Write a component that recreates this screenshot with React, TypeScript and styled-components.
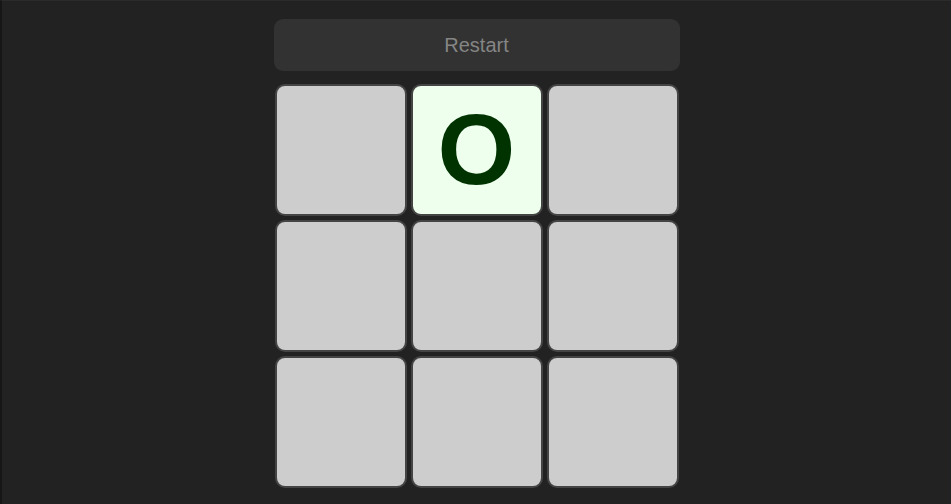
import styled, { createGlobalStyle } from "styled-components";

const GlobalStyle = createGlobalStyle`
  html, body {
    margin: 0;
    padding: 0;
    height: 100%;
    background-color: #222222;
  }
  body {
    border-left: 2px solid #161616;
    border-top: 1px solid #2b2b2b;
    box-sizing: border-box;
    font-family: "Liberation Sans", Arial, sans-serif;
  }
`;

const Page = styled.div`
  display: flex;
  flex-direction: column;
  align-items: center;
  padding-top: 18px;
`;

const Game = styled.div`
  display: flex;
  flex-direction: column;
  align-items: center;
  gap: 13px;
  width: 406px;
`;

const RestartButton = styled.button`
  width: 406px;
  height: 52px;
  border: none;
  border-radius: 9px;
  background-color: #323232;
  color: #858585;
  font-family: "Liberation Sans", Arial, sans-serif;
  font-size: 20px;
  cursor: pointer;
`;

const Board = styled.div`
  display: grid;
  grid-template-columns: repeat(3, 132px);
  grid-auto-rows: 132px;
  gap: 4px;
`;

const Cell = styled.div<{ $filled?: boolean }>`
  box-sizing: border-box;
  border: 2px solid #444444;
  border-radius: 10px;
  background-color: ${(props) => (props.$filled ? "#efffee" : "#cdcdcd")};
  color: #003300;
  display: flex;
  align-items: center;
  justify-content: center;
  font-family: "Liberation Sans", Arial, sans-serif;
  font-size: 100px;
  font-weight: bold;
  line-height: 1;
  padding-bottom: 2px;
`;

const board = ["", "O", "", "", "", "", "", "", ""];

export default function App() {
  return (
    <>
      <GlobalStyle />
      <Page>
        <Game>
          <RestartButton>Restart</RestartButton>
          <Board>
            {board.map((value, i) => (
              <Cell key={i} $filled={value !== ""}>
                {value}
              </Cell>
            ))}
          </Board>
        </Game>
      </Page>
    </>
  );
}
